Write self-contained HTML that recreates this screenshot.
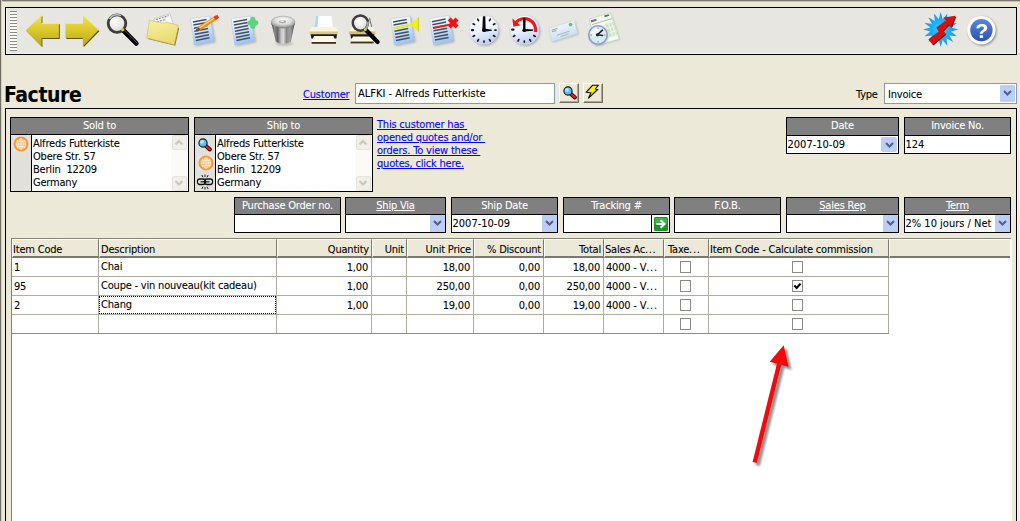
<!DOCTYPE html>
<html>
<head>
<meta charset="utf-8">
<title>Facture</title>
<style>
html,body{margin:0;padding:0}
body{width:1020px;height:521px;overflow:hidden;background:#ece9d8;position:relative;
 font-family:"DejaVu Sans Condensed","Liberation Sans",sans-serif;font-size:11px;color:#000;line-height:13px;letter-spacing:-0.2px;-webkit-text-stroke:0.08px currentColor}
.abs{position:absolute}
div,span,a{box-sizing:border-box}
#edgeT{left:0;top:0;width:1020px;height:2px;background:linear-gradient(#7c7a6e 0,#7c7a6e 1px,#c2c0b2 1px,#c2c0b2 2px)}
#edgeL{left:0;top:0;width:2px;height:521px;background:linear-gradient(to right,#6f6d62 0,#6f6d62 1px,#d6d3c3 1px,#d6d3c3 2px)}
#edgeR{left:1017px;top:108px;width:3px;height:413px;background:#f1eee2}
#tb{left:5px;top:7px;width:1012px;height:48px;border:1px solid #000;background:#e8e6e0;box-shadow:inset 1px -1px 0 #f8f7f3}
#grip{left:10px;top:11px;width:7px;height:40px;
 background:repeating-linear-gradient(to bottom,#8a8a86 0,#8a8a86 1px,#fbfbf8 1px,#fbfbf8 3px)}
#title{left:4px;top:82px;font-weight:bold;font-size:21px;line-height:26px;letter-spacing:-0.4px}
#panel{left:5px;top:108px;width:1012px;height:420px;border:1px solid #000;border-bottom:none}
a{color:#0000ff;text-decoration:underline}
.box{position:absolute;border:1px solid #000;background:#fff}
.box .h{position:absolute;left:0;top:0;right:0;height:17px;background:#808080;border-bottom:1px solid #000;color:#fff;text-align:center;line-height:15px}
.box.t .h{height:18px;line-height:16px}
.box .f{position:absolute;left:0;right:0;top:17px;bottom:0;background:#fff;line-height:17px;padding-left:1px;white-space:nowrap;overflow:hidden;letter-spacing:0;text-indent:-0.5px}
.box.t .f{top:18px}
.dd{position:absolute;right:0;top:17px;width:15px;height:17px;background:#bdcef6}
.box.t .dd{right:1px;top:19px;width:16px;height:15px;border-radius:2px}
.dd svg{position:absolute;left:0;top:0}
.box.t .dd svg{left:0.5px;top:-0.5px}
.inp{position:absolute;background:#fff;border:1px solid #7f9db9}
#grid{left:11px;top:238px;width:1001px;height:290px;background:#fff;border-left:1px solid #85837a;border-top:1px solid #85837a;border-right:2px solid #fbfaf5}
.gh{position:absolute;top:239px;height:19px;background:#ece9d8;border-top:1px solid #fffef8;border-left:1px solid #fffef8;border-right:1px solid #7a786c;border-bottom:2px solid #7a786c;line-height:19px;padding:0 2px 0 0;white-space:nowrap;overflow:hidden}
.gh.r{text-align:right}
.vl{position:absolute;width:1px;background:#aeac9f;top:258px;height:76px}
.hl{position:absolute;height:1px;background:#aeac9f;left:12px;width:877px}
.c{position:absolute;white-space:nowrap;line-height:13px}
.c.r{text-align:right}
.el{letter-spacing:0.7px}
.cb{position:absolute;width:11px;height:12px;border:1px solid #8b8b86;background:#fff}
.btn{width:20px;height:20px;background:#ece9d8;border:1px solid;border-color:#fff #716f64 #716f64 #fff;box-shadow:inset -1px -1px 0 #aca899}
.ic{position:absolute;left:0;top:17px;width:20px;bottom:0;background:#e2e0da;border-right:1px solid #000;box-sizing:content-box}
.ta{position:absolute;left:21px;top:17px;right:17px;bottom:0;line-height:13px;padding:2px 0 0 1px;white-space:nowrap;overflow:hidden}
.sb{position:absolute;right:0;top:17px;width:17px;bottom:0;background:#fbfaf6}
.sbb{position:absolute;left:1px;width:15px;height:15px;background:#f1efe8;border:1px solid #e6e4da;border-radius:2px}
</style>
</head>
<body>
<div id="edgeT" class="abs"></div><div id="edgeL" class="abs"></div><div id="edgeR" class="abs"></div>
<div id="tb" class="abs"></div><div id="grip" class="abs"></div>
<svg class="abs" style="left:0;top:0" width="1020" height="56" viewBox="0 0 1020 56">
<defs>
<linearGradient id="gy" x1="0" y1="0" x2="0" y2="1"><stop offset="0" stop-color="#efe25a"/><stop offset="0.5" stop-color="#d9c828"/><stop offset="1" stop-color="#b8a618"/></linearGradient>
<linearGradient id="gdoc" x1="0" y1="0" x2="0.25" y2="1"><stop offset="0" stop-color="#ffffff"/><stop offset="0.35" stop-color="#e6f0fc"/><stop offset="1" stop-color="#9cc4f2"/></linearGradient>
<linearGradient id="gfold" x1="0" y1="0" x2="0.3" y2="1"><stop offset="0" stop-color="#f9f0a0"/><stop offset="1" stop-color="#eadb70"/></linearGradient>
<linearGradient id="gcan" x1="0" y1="0" x2="1" y2="0"><stop offset="0" stop-color="#3c3c3c"/><stop offset="0.14" stop-color="#8c8c8c"/><stop offset="0.27" stop-color="#646464"/><stop offset="0.42" stop-color="#c8c8c8"/><stop offset="0.52" stop-color="#d8d8d8"/><stop offset="0.64" stop-color="#8a8a8a"/><stop offset="0.8" stop-color="#a2a2a2"/><stop offset="1" stop-color="#4c4c4c"/></linearGradient><radialGradient id="glid" cx="0.5" cy="0.35" r="0.6"><stop offset="0" stop-color="#ffffff"/><stop offset="0.6" stop-color="#dadada"/><stop offset="1" stop-color="#9c9c9c"/></radialGradient>
<linearGradient id="gclk" x1="0.3" y1="0" x2="0.6" y2="1"><stop offset="0" stop-color="#ffffff"/><stop offset="0.45" stop-color="#f0f4fe"/><stop offset="1" stop-color="#bccdf2"/></linearGradient>
<radialGradient id="glens" cx="0.4" cy="0.35" r="0.7"><stop offset="0" stop-color="#ffffff"/><stop offset="1" stop-color="#d8d8d8"/></radialGradient>
<radialGradient id="gstar" cx="0.5" cy="0.5" r="0.5"><stop offset="0" stop-color="#22d4f4"/><stop offset="0.45" stop-color="#1cb4f4"/><stop offset="1" stop-color="#1a8cf8"/></radialGradient>
<linearGradient id="ghelp" x1="0" y1="0" x2="0" y2="1"><stop offset="0" stop-color="#5d86e0"/><stop offset="1" stop-color="#2a52b4"/></linearGradient>
<linearGradient id="genv" x1="0" y1="0" x2="0.4" y2="1"><stop offset="0" stop-color="#ffffff"/><stop offset="1" stop-color="#c4dcf0"/></linearGradient>
<filter id="sh" x="-20%" y="-20%" width="150%" height="150%"><feGaussianBlur stdDeviation="0.8"/></filter>
<g id="doc">
 <polygon points="1.5,4.2 20.5,1.2 25,26.3 5,30.3" fill="#5c6a80" opacity="0.45" filter="url(#sh)"/>
 <polygon points="0,3 19,0 23.6,25.1 3.5,29.1" fill="url(#gdoc)" stroke="#b4c8e0" stroke-width="0.5"/>
 <g stroke="#454f60" stroke-width="1.5"><path d="M2.2,6.1 L15.9,3.5"/><path d="M2.7,9.1 L16.4,6.5"/><path d="M3.2,12.2 L16.9,9.6"/><path d="M3.7,15.2 L17.4,12.6"/><path d="M4.2,18.3 L17.9,15.7"/><path d="M4.7,21.4 L18.4,18.8"/><path d="M5.2,24.4 L18.9,21.8"/></g>
</g>
</defs>
<!-- back arrow -->
<polygon points="26.5,31 42.4,16 42.4,24.3 59.8,24.3 59.8,38.9 42.4,38.9 42.4,47.3" fill="#5e5408"/>
<polygon points="25.7,30.1 41.6,15.1 41.6,23.5 58.9,23.5 58.9,38 41.6,38 41.6,46.4" fill="url(#gy)"/>
<path d="M25.7,30.1 L41.6,15.1 M41.6,23.5 L58.9,23.5" stroke="#f4ea80" stroke-width="1" fill="none"/>
<!-- forward arrow -->
<polygon points="66.3,24.3 83.7,24.3 83.7,16 99.6,31 83.7,47.3 83.7,38.9 66.3,38.9" fill="#5e5408"/>
<polygon points="65.5,23.5 82.9,23.5 82.9,15.1 98.6,30.1 82.9,46.4 82.9,38 65.5,38" fill="url(#gy)"/>
<path d="M65.5,23.5 L82.9,23.5 M82.9,15.1 L98.6,30.1" stroke="#f4ea80" stroke-width="1" fill="none"/>
<!-- magnifier -->
<path d="M123,30 L136.3,43.4" stroke="#000" stroke-width="4.8" stroke-linecap="round"/>
<path d="M124.5,30.2 L137,42.8" stroke="#666" stroke-width="0.8" stroke-linecap="round"/>
<circle cx="117" cy="23.6" r="8.8" fill="url(#glens)" stroke="#3c3c3c" stroke-width="2.8"/>
<path d="M109.5,19 A8.9,8.9 0 0 1 121,15.6" stroke="#c0c0c0" stroke-width="1.6" fill="none"/>
<circle cx="122.6" cy="29.6" r="1.6" fill="#e8c820"/>
<!-- folder -->
<polygon points="153.5,19 169.8,13.6 173.2,23.5 157,26" fill="#f6f6f6" stroke="#b8b8b8" stroke-width="0.6"/>
<path d="M156,19.6 L168.6,15.6 M157,22 L166,19.2" stroke="#8a8a8a" stroke-width="1.1" stroke-dasharray="2 1"/>
<polygon points="150.5,21.4 179.2,28 175.2,45.7 147.8,39" fill="#6a5c20" opacity="0.8"/>
<polygon points="149.5,20.4 164,23.4 166,22 178.2,25.4 178.2,27 174.2,44.7 146.8,38" fill="url(#gfold)" stroke="#c8b860" stroke-width="0.6"/>
<!-- doc + pencil -->
<use href="#doc" x="190.6" y="16"/>
<path d="M198.2,29.2 L217,17" stroke="#f08c20" stroke-width="4"/>
<path d="M199,28 L216.5,16.6" stroke="#f8d840" stroke-width="1.4"/>
<path d="M214.5,18.6 L218.3,16.2" stroke="#f03818" stroke-width="3.6"/>
<path d="M196.6,30.4 L199.6,28.4" stroke="#80481c" stroke-width="2.4"/>
<!-- doc + plus -->
<use href="#doc" x="231.2" y="16"/>
<path d="M252.9,19.4 V26.2 M250.2,22.8 H255.8" stroke="#5cd47c" stroke-width="5.2" stroke-linecap="round"/>
<!-- trash can -->
<ellipse cx="284" cy="43.4" rx="8.6" ry="2.4" fill="#8a8a8a" opacity="0.45" filter="url(#sh)"/>
<path d="M271.4,23 L275.8,41.8 Q283.2,46 290.8,41.8 L294.8,23 Z" fill="url(#gcan)"/>
<path d="M271.3,23.4 Q283,31.6 294.9,23.4" fill="none" stroke="#3a3a3a" stroke-width="1.3" opacity="0.85"/>
<ellipse cx="283.1" cy="22" rx="11.9" ry="5.8" fill="url(#glid)" stroke="#9a9a9a" stroke-width="0.6"/>
<ellipse cx="282.6" cy="21.6" rx="3.6" ry="1.7" fill="#a4a4a4"/>
<ellipse cx="282.2" cy="21.2" rx="2" ry="0.9" fill="#e8e8e8"/>
<!-- printer -->
<g id="prn">
<polygon points="316,16 331.4,16 333,27.4 314.6,27.4" fill="#fdfeff"/>
<polygon points="316,16 318.4,16 317.4,27.4 314.6,27.4" fill="#9edcf0"/>
<polygon points="311.6,27 335.6,27 338,31 309.4,31" fill="#faf4d8"/>
<rect x="309.4" y="31.6" width="28.6" height="2.6" fill="#dcc688"/>
<polygon points="310.6,34.2 337,34.2 336.4,38.6 311.4,38.6" fill="#1e1a10"/>
<polygon points="314,36 333.4,36 336,42 311.6,42" fill="#fcf8e4"/>
<rect x="311.6" y="42" width="24.4" height="1.8" fill="#3c3418"/>
</g>
<!-- print preview -->
<g>
<polygon points="352,27 372,27 375.4,31.4 349,31.4" fill="#faf4d8"/>
<rect x="349" y="31.4" width="26.4" height="2.8" fill="#d8bc74"/>
<polygon points="350.4,34.2 374.4,34.2 373.8,38.4 351,38.4" fill="#1e1a10"/>
<polygon points="353,36.6 370.4,36.6 373.6,41.6 350.6,41.6" fill="#fcf8e4"/>
<rect x="350.6" y="41.6" width="23" height="1.8" fill="#3c3418"/>
<path d="M366,30 L377.6,42" stroke="#000" stroke-width="4.2" stroke-linecap="round"/>
<path d="M366.5,17.6 L369.4,17.6 L371.6,27 L367,27 Z" fill="#f4f4f0"/><path d="M369.4,17.6 L371.6,27" stroke="#55554c" stroke-width="0.9"/><circle cx="360.4" cy="23.1" r="7.6" fill="url(#glens)" stroke="#3c3c3c" stroke-width="2.5"/>
<path d="M365.8,28.4 A7.6,7.6 0 0 0 367.9,21.6" stroke="#a8a8a8" stroke-width="1.6" fill="none"/>
<circle cx="365.4" cy="29.6" r="1.5" fill="#ecd018"/>
</g>
<!-- doc + yellow insert -->
<use href="#doc" x="390.8" y="16"/>
<path d="M393.2,28.4 L411,24.8" stroke="#eef01c" stroke-width="2"/>
<polygon points="409.6,24.6 418.4,17.2 418.4,31.6" fill="#f0f020"/>
<path d="M418.4,17.2 V31.6" stroke="#c8c010" stroke-width="0.8"/>
<!-- doc + red x -->
<use href="#doc" x="429.7" y="15.6"/>
<path d="M433,28.2 L450,24.6" stroke="#f01414" stroke-width="1.8"/>
<path d="M449.2,19.1 L457,26.9 M457,19.1 L449.2,26.9" stroke="#f41010" stroke-width="4.2"/>
<!-- clock -->
<g id="clk">
<circle cx="485" cy="31.2" r="14.6" fill="#70788c" opacity="0.55" filter="url(#sh)"/>
<circle cx="483.8" cy="29.9" r="14.5" fill="url(#gclk)" stroke="#d4dcf0" stroke-width="0.6"/>
<g stroke="#16161c" stroke-width="1.7" stroke-linecap="round">
<path d="M489.5,20.6 L490.3,19.2"/><path d="M493.5,24.6 L494.9,23.8"/><path d="M495,30.1 L496,30.1"/><path d="M493.5,35.6 L494.9,36.4"/><path d="M489.5,39.6 L490.3,41"/><path d="M484,41.1 L484,42.1"/><path d="M478.5,39.6 L477.7,41"/><path d="M474.5,35.6 L473.1,36.4"/><path d="M473,30.1 L472,30.1" stroke-width="2.4"/><path d="M474.5,24.6 L473.1,23.8"/><path d="M478.5,20.6 L477.7,19.2"/>
</g>
<polygon points="482.9,16.2 485.3,16.2 485.7,30.4 482.3,30.4" fill="#060608"/>
<polygon points="484,28.6 491.8,29.7 491.8,30.7 484,31.8" fill="#060608"/>
<circle cx="484" cy="30.2" r="1.9" fill="#060608"/>
</g>
<!-- clock + red arrow -->
<g>
<circle cx="525.8" cy="31.2" r="14.6" fill="#70788c" opacity="0.55" filter="url(#sh)"/>
<circle cx="524.6" cy="29.9" r="14.5" fill="url(#gclk)" stroke="#d4dcf0" stroke-width="0.6"/>
<g stroke="#16161c" stroke-width="1.7" stroke-linecap="round">
<path d="M533.8,35.6 L535.2,36.4"/><path d="M529.8,39.6 L530.6,41"/><path d="M524.3,41.1 L524.3,42.1"/><path d="M518.8,39.6 L518,41"/><path d="M514.8,35.6 L513.4,36.4"/><path d="M513.3,29.6 L512.3,29.6" stroke-width="2.4"/>
</g>
<path d="M535.4,32 A11.2,11.2 0 0 0 516,22.4" fill="none" stroke="#f01818" stroke-width="3.2"/>
<polygon points="512.4,18.4 513.2,26.6 520.6,25.4" fill="#f01818"/>
<polygon points="523,18.4 525.6,18.4 525.4,30.4 523.2,30.4" fill="#060608"/>
<polygon points="524.3,28.9 533,29.6 533,30.8 524.3,31.5" fill="#060608"/>
<circle cx="524.3" cy="30.2" r="1.9" fill="#060608"/>
</g>
<!-- envelope -->
<polygon points="550,29.4 575.2,21.4 578.7,34.6 553.1,42.6" fill="#8090a4" opacity="0.5" filter="url(#sh)"/>
<polygon points="549,28.3 574.2,20.4 577.7,33.6 552.1,41.6" fill="url(#genv)" stroke="#c8d4e0" stroke-width="0.5"/>
<circle cx="570.6" cy="24.6" r="1.9" fill="#6cc070"/>
<path d="M551.6,30.2 L557.6,28.3 M552,31.8 L556.4,30.4" stroke="#8c98a8" stroke-width="0.9"/>
<path d="M557,35.2 L569.6,31.2 M560.6,36.6 L568.6,34" stroke="#9cb0b8" stroke-width="0.9"/>
<!-- statement + compass -->
<polygon points="590,20 611.2,13.8 620.2,39.8 596,46" fill="#808878" opacity="0.4" filter="url(#sh)"/>
<polygon points="589.1,19 610.3,12.9 619.2,38.9 597,45.6" fill="#f6faf2" stroke="#c8d0c4" stroke-width="0.6"/>
<path d="M591,21.4 L596.4,19.8" stroke="#707880" stroke-width="2.2"/>
<path d="M604.4,16.4 L609,15" stroke="#2c8c44" stroke-width="1.8"/>
<path d="M592,24.6 L612,18.6" stroke="#a8b4a8" stroke-width="0.9"/>
<path d="M605,24 L613.4,21.4 L617.8,34.6 L609.6,37.2 Z" fill="#cfe6c8"/>
<path d="M608.4,23 L612.6,36 M611.4,22 L615.6,35" stroke="#f6faf2" stroke-width="0.8"/>
<path d="M606,29 L615,26.2 M607.6,33.4 L616.6,30.6" stroke="#f6faf2" stroke-width="0.8"/>
<circle cx="598.6" cy="35.8" r="9.8" fill="#707890" opacity="0.4" filter="url(#sh)"/>
<circle cx="598" cy="35" r="9.2" fill="#d4ecfc" stroke="#8c98cc" stroke-width="1.5"/>
<circle cx="596" cy="32.6" r="4.6" fill="#f2fbff" opacity="0.8"/>
<path d="M598,27.4 V29 M598,41 V42.6 M590.4,35 H592 M604,35 H605.6" stroke="#f0963c" stroke-width="1.4"/>
<path d="M597.6,34.6 L602.4,30.2" stroke="#20242c" stroke-width="1.7" stroke-linecap="round"/>
<path d="M597.6,34.8 L602.6,35.4" stroke="#20242c" stroke-width="1.5" stroke-linecap="round"/>
<circle cx="597.4" cy="34.8" r="1.6" fill="#20242c"/>
<!-- starburst -->
<polygon id="star" fill="url(#gstar)" points="940.7,12.1 942.7,19.3 947.4,13.4 946.5,20.9 953.1,17.2 949.4,23.8 956.9,22.9 951.0,27.6 958.2,29.6 951.0,31.6 956.9,36.3 949.4,35.4 953.1,42.0 946.5,38.3 947.4,45.8 942.7,39.9 940.7,47.1 938.7,39.9 934.0,45.8 934.9,38.3 928.3,42.0 932.0,35.4 924.5,36.3 930.4,31.6 923.2,29.6 930.4,27.6 924.5,22.9 932.0,23.8 928.3,17.2 934.9,20.9 934.0,13.4 938.7,19.3"/>
<polygon points="928.4,39.2 938.8,31.6 936.4,27.6 946.2,20.2 943.4,17.4 955.5,15.8 951.2,27.2 948.6,24.6 943,30.6 945.4,33.8 932.6,44.6" fill="#7c0c0c" transform="translate(0.8,0.9)"/>
<polygon points="928.4,39.2 938.8,31.6 936.4,27.6 946.2,20.2 943.4,17.4 955.5,15.8 951.2,27.2 948.6,24.6 943,30.6 945.4,33.8 932.6,44.6" fill="#d81010"/>
<!-- help -->
<circle cx="982.4" cy="31.2" r="14.2" fill="#404040" opacity="0.55" filter="url(#sh)"/>
<circle cx="981.4" cy="30.1" r="14.2" fill="#fdfdff"/>
<circle cx="981.4" cy="30.1" r="11.2" fill="url(#ghelp)"/>
<text x="981.5" y="37.6" text-anchor="middle" font-family="'Liberation Sans','DejaVu Sans',sans-serif" font-weight="bold" font-size="21" fill="#ffffff">?</text>
</svg>

<div id="title" class="abs">Facture</div>
<a class="abs" style="left:303px;top:88px">Customer</a>
<div class="inp" style="left:355px;top:83px;width:200px;height:21px;line-height:17px;padding-left:2px;padding-top:1px;white-space:nowrap;letter-spacing:0">ALFKI - Alfreds Futterkiste</div>
<div class="abs btn" style="left:559px;top:83px"></div><div class="abs btn" style="left:583px;top:83px"></div>
<div class="abs" style="left:856px;top:88px">Type</div>
<div class="inp" style="left:884px;top:83px;width:133px;height:21px;line-height:17px;padding-left:3px;padding-top:2px">Invoice<div class="dd" style="top:1px;right:1px;height:17px;width:15px;border-radius:1px"><svg width="15" height="16" viewBox="0 0 15 16"><path d="M4 6 L7.5 9.5 L11 6" fill="none" stroke="#4d6185" stroke-width="2"/></svg></div></div>
<div id="panel" class="abs"></div>
<div class="box" style="left:10px;top:117px;width:179px;height:75px"><div class="h">Sold to</div><div class="ic"></div><div class="ta">Alfreds Futterkiste<br>Obere Str. 57<br>Berlin&nbsp; 12209<br>Germany</div><div class="sb"><div class="sbb" style="top:0"></div><div class="sbb" style="bottom:0"></div><svg width="16" height="16" viewBox="0 0 16 16" class="abs" style="left:0;top:0"><path d="M4.5 9.5 L8 6 L11.5 9.5" fill="none" stroke="#c9c7ba" stroke-width="2"/></svg><svg width="16" height="16" viewBox="0 0 16 16" class="abs" style="left:0;bottom:0"><path d="M4.5 6 L8 9.5 L11.5 6" fill="none" stroke="#c9c7ba" stroke-width="2"/></svg></div></div>
<svg class="abs" style="left:12.8px;top:136.1px" width="16" height="16" viewBox="0 0 16 16"><rect x="0" y="0" width="16" height="16" fill="#e2e6ea"/><circle cx="8" cy="8" r="6.7" fill="#ffb060" stroke="#fc9630" stroke-width="1.7"/><g stroke="#fff" stroke-width="0.9" fill="none" opacity="0.8"><ellipse cx="8" cy="8" rx="2.3" ry="5.2"/><path d="M8 2.8V13.2M2.8 8H13.2M3.6 5.4H12.4M3.6 10.6H12.4M4.6 4 Q2.6 8 4.6 12M11.4 4 Q13.4 8 11.4 12"/></g></svg>
<div class="box" style="left:194px;top:117px;width:179px;height:75px"><div class="h">Ship to</div><div class="ic"></div><div class="ta">Alfreds Futterkiste<br>Obere Str. 57<br>Berlin&nbsp; 12209<br>Germany</div><div class="sb"><div class="sbb" style="top:0"></div><div class="sbb" style="bottom:0"></div><svg width="16" height="16" viewBox="0 0 16 16" class="abs" style="left:0;top:0"><path d="M4.5 9.5 L8 6 L11.5 9.5" fill="none" stroke="#c9c7ba" stroke-width="2"/></svg><svg width="16" height="16" viewBox="0 0 16 16" class="abs" style="left:0;bottom:0"><path d="M4.5 6 L8 9.5 L11.5 6" fill="none" stroke="#c9c7ba" stroke-width="2"/></svg></div></div>
<svg class="abs" style="left:196.1px;top:135.5px" width="18" height="18" viewBox="0 0 18 18"><path d="M10 10 L13.9 13.5" stroke="#200808" stroke-width="4" stroke-linecap="round"/><path d="M10.2 10.2 L13.8 13.4" stroke="#f01828" stroke-width="2.3" stroke-linecap="round"/><circle cx="7" cy="7" r="4.1" fill="#58c0f0" stroke="#101820" stroke-width="1.1"/><circle cx="6" cy="5.8" r="1.9" fill="#c8f0ff" opacity="0.85"/></svg>
<svg class="abs" style="left:197.6px;top:155.4px" width="16" height="16" viewBox="0 0 16 16"><rect x="0" y="0" width="16" height="16" fill="#e2e6ea"/><circle cx="8" cy="8" r="6.7" fill="#ffb060" stroke="#fc9630" stroke-width="1.7"/><g stroke="#fff" stroke-width="0.9" fill="none" opacity="0.8"><ellipse cx="8" cy="8" rx="2.3" ry="5.2"/><path d="M8 2.8V13.2M2.8 8H13.2M3.6 5.4H12.4M3.6 10.6H12.4M4.6 4 Q2.6 8 4.6 12M11.4 4 Q13.4 8 11.4 12"/></g></svg>
<svg class="abs" style="left:196px;top:174px" width="18" height="16" viewBox="0 0 20 16" preserveAspectRatio="none"><g fill="none" stroke="#111" stroke-width="1.3"><rect x="1.5" y="5" width="9" height="5.5" rx="2.7"/><rect x="9.5" y="5" width="9" height="5.5" rx="2.7"/><path d="M5 7.8H15" stroke-width="1.2"/><path d="M10 0.5V3M6.5 1L7.8 3.3M13.5 1L12.2 3.3M10 15.5V13M6.5 15L7.8 12.7M13.5 15L12.2 12.7" stroke-width="1"/></g></svg>
<a class="abs" style="left:377px;top:118px;white-space:pre;line-height:13px">This customer has 
opened quotes and/or 
orders. To view these 
quotes, click here.</a>
<div class="box t" style="left:786px;top:117px;width:113px;height:37px"><div class="h">Date</div><div class="f">2007-10-09</div><div class="dd"><svg width="15" height="16" viewBox="0 0 15 16"><path d="M4 6 L7.5 9.5 L11 6" fill="none" stroke="#4d6185" stroke-width="2"/></svg></div></div>

<div class="box t" style="left:904px;top:117px;width:107px;height:37px"><div class="h">Invoice No.</div><div class="f">124</div></div>

<div class="box" style="left:234px;top:197px;width:107px;height:36px"><div class="h">Purchase Order no.</div><div class="f"></div></div>

<div class="box" style="left:345px;top:197px;width:101px;height:36px"><div class="h"><u>Ship Via</u></div><div class="f"></div><div class="dd"><svg width="15" height="16" viewBox="0 0 15 16"><path d="M4 6 L7.5 9.5 L11 6" fill="none" stroke="#4d6185" stroke-width="2"/></svg></div></div>

<div class="box" style="left:451px;top:197px;width:107px;height:36px"><div class="h">Ship Date</div><div class="f">2007-10-09</div><div class="dd"><svg width="15" height="16" viewBox="0 0 15 16"><path d="M4 6 L7.5 9.5 L11 6" fill="none" stroke="#4d6185" stroke-width="2"/></svg></div></div>

<div class="box" style="left:563px;top:197px;width:107px;height:36px"><div class="h">Tracking #</div><div class="f"></div></div>

<div class="abs" style="left:651px;top:215px;width:1px;height:17px;background:#000"></div>
<div class="box" style="left:674px;top:197px;width:107px;height:36px"><div class="h">F.O.B.</div><div class="f"></div></div>

<div class="box" style="left:786px;top:197px;width:113px;height:36px"><div class="h"><u>Sales Rep</u></div><div class="f"></div><div class="dd"><svg width="15" height="16" viewBox="0 0 15 16"><path d="M4 6 L7.5 9.5 L11 6" fill="none" stroke="#4d6185" stroke-width="2"/></svg></div></div>

<div class="box" style="left:904px;top:197px;width:107px;height:36px"><div class="h"><u>Term</u></div><div class="f">2% 10 jours / Net</div><div class="dd"><svg width="15" height="16" viewBox="0 0 15 16"><path d="M4 6 L7.5 9.5 L11 6" fill="none" stroke="#4d6185" stroke-width="2"/></svg></div></div>

<div id="grid" class="abs"></div>
<div class="gh" style="left:12px;width:87px">Item Code</div>
<div class="gh" style="left:99px;width:178px"><span style="padding-left:1px">Description</span></div>
<div class="gh r" style="left:277px;width:95px">Quantity</div>
<div class="gh r" style="left:372px;width:35px">Unit</div>
<div class="gh r" style="left:407px;width:67px">Unit Price</div>
<div class="gh r" style="left:474px;width:70px">% Discount</div>
<div class="gh r" style="left:544px;width:60px">Total</div>
<div class="gh" style="left:604px;width:60px">Sales Ac<span class="el">...</span></div>
<div class="gh" style="left:664px;width:45px"><span style="padding-left:3px">Taxe</span><span class="el">...</span></div>
<div class="gh" style="left:709px;width:180px">Item Code - Calculate commission</div>
<div class="gh" style="left:889px;width:121px;border-right:none"></div>
<div class="vl" style="left:98px"></div>
<div class="vl" style="left:276px"></div>
<div class="vl" style="left:371px"></div>
<div class="vl" style="left:406px"></div>
<div class="vl" style="left:473px"></div>
<div class="vl" style="left:543px"></div>
<div class="vl" style="left:603px"></div>
<div class="vl" style="left:663px"></div>
<div class="vl" style="left:708px"></div>
<div class="vl" style="left:888px"></div>
<div class="hl" style="top:276px"></div>
<div class="hl" style="top:295px"></div>
<div class="hl" style="top:314px"></div>
<div class="hl" style="top:333px;background:#8f8d80"></div>
<div class="c" style="left:14px;top:261px">1</div><div class="c" style="left:101px;top:260px">Chai</div><div class="c r" style="left:288px;width:80px;top:261px">1,00</div><div class="c r" style="left:390px;width:80px;top:261px">18,00</div><div class="c r" style="left:460px;width:80px;top:261px">0,00</div><div class="c r" style="left:520px;width:80px;top:261px">18,00</div><div class="c" style="left:606px;top:261px">4000 - V<span class="el">...</span></div>
<div class="cb" style="left:680px;top:261px"></div><div class="cb" style="left:792px;top:261px"></div>
<div class="c" style="left:14px;top:280px">95</div><div class="c" style="left:101px;top:279px">Coupe - vin nouveau(kit cadeau)</div><div class="c r" style="left:288px;width:80px;top:280px">1,00</div><div class="c r" style="left:390px;width:80px;top:280px">250,00</div><div class="c r" style="left:460px;width:80px;top:280px">0,00</div><div class="c r" style="left:520px;width:80px;top:280px">250,00</div><div class="c" style="left:606px;top:280px">4000 - V<span class="el">...</span></div>
<div class="cb" style="left:680px;top:280px"></div><div class="cb" style="left:792px;top:280px"><svg width="9" height="10" viewBox="0 0 9 10" style="position:absolute;left:0;top:0"><path d="M1.4 4.6 L3.6 6.9 L7.6 2.6" fill="none" stroke="#000" stroke-width="2.1"/></svg></div>
<div class="c" style="left:14px;top:299px">2</div><div class="c" style="left:101px;top:298px">Chang</div><div class="c r" style="left:288px;width:80px;top:299px">1,00</div><div class="c r" style="left:390px;width:80px;top:299px">19,00</div><div class="c r" style="left:460px;width:80px;top:299px">0,00</div><div class="c r" style="left:520px;width:80px;top:299px">19,00</div><div class="c" style="left:606px;top:299px">4000 - V<span class="el">...</span></div>
<div class="cb" style="left:680px;top:299px"></div><div class="cb" style="left:792px;top:299px"></div>
<div class="cb" style="left:680px;top:318px"></div><div class="cb" style="left:792px;top:318px"></div>
<div class="abs" style="left:99px;top:296px;width:177px;height:18px;border:1px dotted #000"></div>

<svg class="abs" style="left:560.5px;top:83.5px" width="18" height="18" viewBox="0 0 18 18"><path d="M10 10 L13.9 13.5" stroke="#200808" stroke-width="4" stroke-linecap="round"/><path d="M10.2 10.2 L13.8 13.4" stroke="#f01828" stroke-width="2.3" stroke-linecap="round"/><circle cx="7" cy="7" r="4.1" fill="#58c0f0" stroke="#101820" stroke-width="1.1"/><circle cx="6" cy="5.8" r="1.9" fill="#c8f0ff" opacity="0.85"/></svg>
<svg class="abs" style="left:583px;top:83px" width="20" height="20" viewBox="583 83 20 20"><polygon points="592.5,85.3 598.2,85.3 595.4,88.9 597.7,89.5 588.3,98.4 590.9,93 586.3,92.2" fill="#f8f010" stroke="#0c0c04" stroke-width="1.1" stroke-linejoin="miter"/></svg>
<svg class="abs" style="left:654px;top:217px" width="14" height="14" viewBox="0 0 14 14"><rect x="0" y="0" width="14" height="14" rx="1.5" fill="#1f9424"/><rect x="1" y="1" width="12" height="6" rx="1" fill="#4cb850" opacity="0.75"/><path d="M2.4 7 H10 M6.6 3.2 L10.6 7 L6.6 10.8" fill="none" stroke="#fff" stroke-width="2"/></svg>
<svg class="abs" style="left:730px;top:335px" width="90" height="140" viewBox="730 335 90 140">
<defs><filter id="ash" x="-30%" y="-10%" width="160%" height="120%"><feGaussianBlur stdDeviation="1.3"/></filter></defs>
<g transform="translate(3,3)" opacity="0.5" filter="url(#ash)"><path d="M779.1,364.2 L754.7,462.5" stroke="#222" stroke-width="4.4"/><polygon points="783.7,345.2 769.7,361.8 788.5,366.7" fill="#222"/></g>
<path d="M779.1,364.2 L754.7,462.5" stroke="#f60808" stroke-width="4.4"/><polygon points="783.7,345.2 769.7,361.8 788.5,366.7" fill="#f60808"/>
</svg>
</body>
</html>
